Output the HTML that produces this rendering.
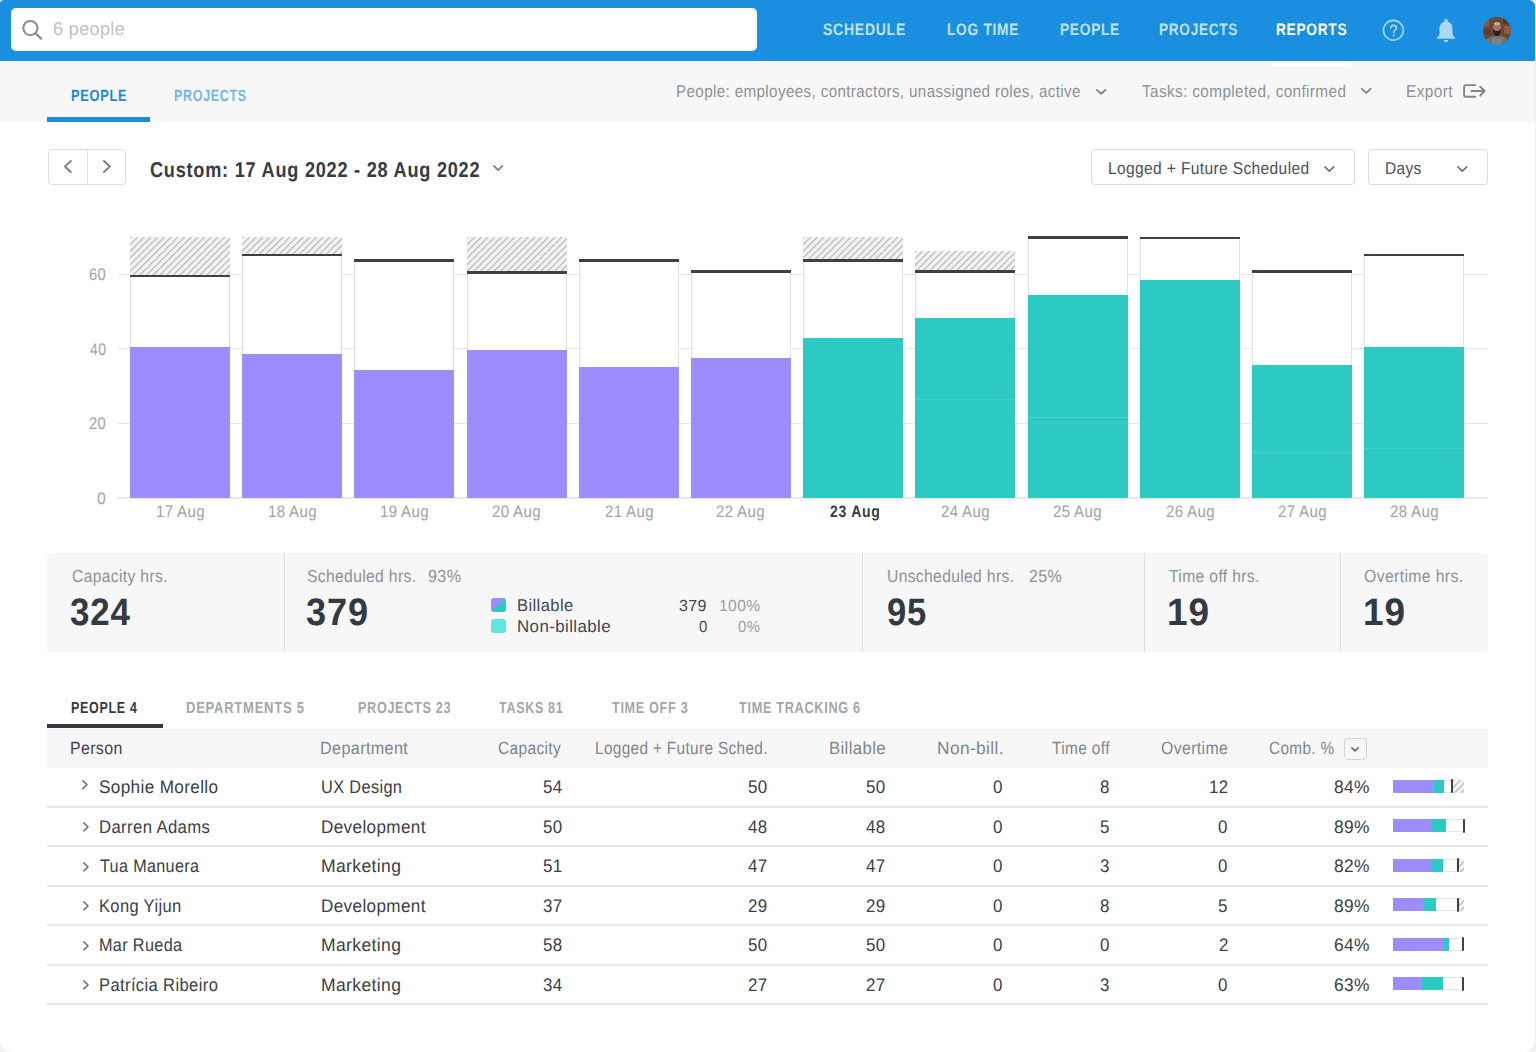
<!DOCTYPE html>
<html><head><meta charset="utf-8"><title>Reports</title>
<style>
html,body{margin:0;padding:0}
body{width:1536px;height:1052px;overflow:hidden;background:#f1f1f1;font-family:"Liberation Sans",sans-serif;position:relative}
#win{position:absolute;left:0;top:0;width:1535px;height:1052px;background:#fff;border-radius:4px 6px 12px 12px;overflow:hidden}
.b{position:absolute;box-sizing:border-box}
.t{position:absolute;white-space:pre;transform-origin:0 0;text-rendering:geometricPrecision}
</style></head><body><div id="win">
<div class="b" style="left:0px;top:0px;width:1535px;height:60.5px;background:#1b8fdf"></div>
<div class="b" style="left:11px;top:8px;width:746px;height:42.5px;background:#fff;border-radius:5px"></div>
<svg class="b" style="left:20px;top:18px" width="26" height="26" viewBox="0 0 26 26"><circle cx="10.4" cy="10.1" r="7.1" fill="none" stroke="#8f8f8f" stroke-width="2.1"/><path d="M15.6 15.3 L21.2 20.6" stroke="#8f8f8f" stroke-width="2.3" stroke-linecap="round"/></svg>
<svg class="b" style="left:1380px;top:17px" width="27" height="27" viewBox="0 0 27 27"><circle cx="13.4" cy="13.3" r="9.9" fill="none" stroke="#a9d9f7" stroke-width="1.6"/><path d="M10.7 11.1 C10.7 9.3 12 8.4 13.5 8.4 C15.1 8.4 16.4 9.5 16.4 11 C16.4 12.8 13.8 13.3 13.8 15.6" fill="none" stroke="#a9d9f7" stroke-width="1.6" stroke-linecap="round"/><circle cx="13.8" cy="18.3" r="1.1" fill="#a9d9f7"/></svg>
<svg class="b" style="left:1434px;top:18px" width="24" height="26" viewBox="0 0 24 26"><circle cx="12" cy="2.9" r="1.8" fill="#a9d9f7"/><path d="M12 3.6 C15.6 3.6 18.5 6.2 18.5 10.2 L18.5 16.4 L21.1 20 C21.4 20.4 21.3 20.8 20.8 20.8 L3.2 20.8 C2.7 20.8 2.6 20.4 2.9 20 L5.5 16.4 L5.5 10.2 C5.5 6.2 8.4 3.6 12 3.6 Z" fill="#a9d9f7"/><path d="M9.6 21.9 L14.4 21.9 C14.2 23.3 13.2 24.1 12 24.1 C10.8 24.1 9.8 23.3 9.6 21.9 Z" fill="#a9d9f7"/></svg>
<svg class="b" style="left:1483px;top:16.5px" width="28" height="28" viewBox="0 0 28 28"><defs><clipPath id="av"><circle cx="14" cy="14" r="13.9"/></clipPath></defs><g clip-path="url(#av)"><rect width="28" height="28" fill="#6e4634"/><rect x="0" y="3" width="6" height="7" fill="#8a5a42"/><rect x="20" y="1" width="8" height="6" fill="#4c3a36"/><rect x="21" y="9" width="7" height="8" fill="#8b5b43"/><rect x="2" y="12" width="6" height="6" fill="#5a3d33"/><path d="M1 28 C2 21.5 6.5 18.8 14 18.8 C21.5 18.8 26 21.5 27 28 Z" fill="#6c7177"/><path d="M9 20 C11 21.5 17 21.5 19 20 L19 28 L9 28 Z" fill="#7d8288"/><ellipse cx="14" cy="10.8" rx="4.1" ry="5.4" fill="#9a7464"/><ellipse cx="14" cy="6.8" rx="3.2" ry="1.8" fill="#c8a696"/><path d="M9.9 11.5 C10.2 16.8 12 19 14 19 C16 19 17.8 16.8 18.1 11.5 C17 13.4 15.6 14 14 14 C12.4 14 11 13.4 9.9 11.5 Z" fill="#2a201c"/></g></svg>
<div class="b" style="left:0px;top:60.5px;width:1535px;height:61.5px;background:#f7f7f7"></div>
<div class="b" style="left:1272px;top:62px;width:79px;height:5px;background:#fff"></div>
<div class="b" style="left:47px;top:117px;width:103px;height:5px;background:#1b8bd8"></div>
<svg class="b" style="left:1095.8px;top:88.6px;overflow:visible" width="10.4" height="5.6"><path d="M0.85 0.85 L5.2 4.75 L9.55 0.85" fill="none" stroke="#7c8187" stroke-width="1.7" stroke-linecap="round" stroke-linejoin="round"/></svg>
<svg class="b" style="left:1361px;top:88.2px;overflow:visible" width="10.4" height="5.8"><path d="M0.85 0.85 L5.2 4.95 L9.55 0.85" fill="none" stroke="#7c8187" stroke-width="1.7" stroke-linecap="round" stroke-linejoin="round"/></svg>
<svg class="b" style="left:1463px;top:83px" width="24" height="16" viewBox="0 0 24 16"><path d="M12.3 2.1 L3.2 2.1 C1.9 2.1 1.1 2.9 1.1 4.2 L1.1 11.7 C1.1 13 1.9 13.8 3.2 13.8 L12.3 13.8" fill="none" stroke="#80868b" stroke-width="1.9" stroke-linecap="round"/><path d="M8.3 8 L21.6 8 M17.2 3.6 L21.6 8 L17.2 12.6" fill="none" stroke="#80868b" stroke-width="1.9" stroke-linecap="round" stroke-linejoin="round"/></svg>
<div class="b" style="left:47.5px;top:148.5px;width:78.5px;height:36.5px;border:1px solid #dedede;border-radius:4px;background:#fff"></div>
<div class="b" style="left:86.5px;top:149px;width:1.5px;height:35.5px;background:#e3e3e3"></div>
<svg class="b" style="left:63.8px;top:160.4px;overflow:visible" width="7.8" height="13"><path d="M6.8 1 L1 6.5 L6.8 12" fill="none" stroke="#7b8187" stroke-width="2" stroke-linecap="round" stroke-linejoin="round"/></svg>
<svg class="b" style="left:102.7px;top:160.4px;overflow:visible" width="7.8" height="13"><path d="M1 1 L6.8 6.5 L1 12" fill="none" stroke="#7b8187" stroke-width="2" stroke-linecap="round" stroke-linejoin="round"/></svg>
<svg class="b" style="left:493.1px;top:165px;overflow:visible" width="10.3" height="6"><path d="M0.9 0.9 L5.15 5.1 L9.4 0.9" fill="none" stroke="#7b8187" stroke-width="1.8" stroke-linecap="round" stroke-linejoin="round"/></svg>
<div class="b" style="left:1090.5px;top:148.5px;width:264.5px;height:36.5px;border:1px solid #dcdcdc;border-radius:4px;background:#fff"></div>
<svg class="b" style="left:1324.2px;top:165.5px;overflow:visible" width="10.6" height="6"><path d="M0.85 0.85 L5.3 5.15 L9.75 0.85" fill="none" stroke="#6e747a" stroke-width="1.7" stroke-linecap="round" stroke-linejoin="round"/></svg>
<div class="b" style="left:1367.7px;top:148.5px;width:120px;height:36.5px;border:1px solid #dcdcdc;border-radius:4px;background:#fff"></div>
<svg class="b" style="left:1457px;top:165.5px;overflow:visible" width="10.6" height="6"><path d="M0.85 0.85 L5.3 5.15 L9.75 0.85" fill="none" stroke="#6e747a" stroke-width="1.7" stroke-linecap="round" stroke-linejoin="round"/></svg>
<div class="b" style="left:118px;top:274px;width:1370px;height:1px;background:#e6e6e6"></div>
<div class="b" style="left:118px;top:348px;width:1370px;height:1px;background:#e6e6e6"></div>
<div class="b" style="left:118px;top:423px;width:1370px;height:1px;background:#e6e6e6"></div>
<div class="b" style="left:118px;top:497px;width:1370px;height:2px;background:#e8e8e8"></div>
<svg width="0" height="0" style="position:absolute"><defs><pattern id="hp" patternUnits="userSpaceOnUse" width="4.74" height="20" patternTransform="rotate(45)"><rect width="4.74" height="20" fill="#f3f3f3"/><rect x="0" width="1.25" height="20" fill="#b8b8b8"/></pattern></defs></svg>
<svg class="b" style="left:130px;top:237px" width="100" height="38.3"><rect width="100%" height="100%" fill="url(#hp)"/></svg>
<div class="b" style="left:130px;top:275.8px;width:100px;height:222.2px;background:#fff;border:1px solid #e3e3e3;border-bottom:none"></div>
<div class="b" style="left:130px;top:347.3px;width:100px;height:150.7px;background:#9b8dfe"></div>
<div class="b" style="left:130px;top:274.8px;width:100px;height:2.6px;background:#3b4149"></div>
<svg class="b" style="left:242.2px;top:237px" width="100" height="17.3"><rect width="100%" height="100%" fill="url(#hp)"/></svg>
<div class="b" style="left:242.2px;top:254.8px;width:100px;height:243.2px;background:#fff;border:1px solid #e3e3e3;border-bottom:none"></div>
<div class="b" style="left:242.2px;top:353.7px;width:100px;height:144.3px;background:#9b8dfe"></div>
<div class="b" style="left:242.2px;top:253.8px;width:100px;height:2.6px;background:#3b4149"></div>
<div class="b" style="left:354.3px;top:260px;width:100px;height:238px;background:#fff;border:1px solid #e3e3e3;border-bottom:none"></div>
<div class="b" style="left:354.3px;top:370.3px;width:100px;height:127.7px;background:#9b8dfe"></div>
<div class="b" style="left:354.3px;top:259px;width:100px;height:2.6px;background:#3b4149"></div>
<svg class="b" style="left:466.5px;top:237px" width="100" height="34.6"><rect width="100%" height="100%" fill="url(#hp)"/></svg>
<div class="b" style="left:466.5px;top:272.1px;width:100px;height:225.9px;background:#fff;border:1px solid #e3e3e3;border-bottom:none"></div>
<div class="b" style="left:466.5px;top:350.3px;width:100px;height:147.7px;background:#9b8dfe"></div>
<div class="b" style="left:466.5px;top:271.1px;width:100px;height:2.6px;background:#3b4149"></div>
<div class="b" style="left:579px;top:260px;width:100px;height:238px;background:#fff;border:1px solid #e3e3e3;border-bottom:none"></div>
<div class="b" style="left:579px;top:366.9px;width:100px;height:131.1px;background:#9b8dfe"></div>
<div class="b" style="left:579px;top:259px;width:100px;height:2.6px;background:#3b4149"></div>
<div class="b" style="left:690.8px;top:271.2px;width:100px;height:226.8px;background:#fff;border:1px solid #e3e3e3;border-bottom:none"></div>
<div class="b" style="left:690.8px;top:358.4px;width:100px;height:139.6px;background:#9b8dfe"></div>
<div class="b" style="left:690.8px;top:270.2px;width:100px;height:2.6px;background:#3b4149"></div>
<svg class="b" style="left:803px;top:237px" width="100" height="22.5"><rect width="100%" height="100%" fill="url(#hp)"/></svg>
<div class="b" style="left:803px;top:260px;width:100px;height:238px;background:#fff;border:1px solid #e3e3e3;border-bottom:none"></div>
<div class="b" style="left:803px;top:337.5px;width:100px;height:160.5px;background:#2ccac3"></div>
<div class="b" style="left:803px;top:259px;width:100px;height:2.6px;background:#3b4149"></div>
<svg class="b" style="left:915.2px;top:251.1px" width="100" height="19.7"><rect width="100%" height="100%" fill="url(#hp)"/></svg>
<div class="b" style="left:915.2px;top:271.3px;width:100px;height:226.7px;background:#fff;border:1px solid #e3e3e3;border-bottom:none"></div>
<div class="b" style="left:915.2px;top:317.5px;width:100px;height:180.5px;background:#2ccac3"></div>
<div class="b" style="left:915.2px;top:398.9px;width:100px;height:1px;background:rgba(255,255,255,0.12)"></div>
<div class="b" style="left:915.2px;top:270.3px;width:100px;height:2.6px;background:#3b4149"></div>
<div class="b" style="left:1027.8px;top:237.3px;width:100px;height:260.7px;background:#fff;border:1px solid #e3e3e3;border-bottom:none"></div>
<div class="b" style="left:1027.8px;top:295.4px;width:100px;height:202.6px;background:#2ccac3"></div>
<div class="b" style="left:1027.8px;top:416.9px;width:100px;height:1px;background:rgba(255,255,255,0.12)"></div>
<div class="b" style="left:1027.8px;top:236.3px;width:100px;height:2.6px;background:#3b4149"></div>
<div class="b" style="left:1140px;top:237.6px;width:100px;height:260.4px;background:#fff;border:1px solid #e3e3e3;border-bottom:none"></div>
<div class="b" style="left:1140px;top:280.1px;width:100px;height:217.9px;background:#2ccac3"></div>
<div class="b" style="left:1140px;top:236.6px;width:100px;height:2.6px;background:#3b4149"></div>
<div class="b" style="left:1252px;top:271.3px;width:100px;height:226.7px;background:#fff;border:1px solid #e3e3e3;border-bottom:none"></div>
<div class="b" style="left:1252px;top:364.7px;width:100px;height:133.3px;background:#2ccac3"></div>
<div class="b" style="left:1252px;top:451.5px;width:100px;height:1px;background:rgba(255,255,255,0.12)"></div>
<div class="b" style="left:1252px;top:270.3px;width:100px;height:2.6px;background:#3b4149"></div>
<div class="b" style="left:1364.2px;top:254.8px;width:100px;height:243.2px;background:#fff;border:1px solid #e3e3e3;border-bottom:none"></div>
<div class="b" style="left:1364.2px;top:347.1px;width:100px;height:150.9px;background:#2ccac3"></div>
<div class="b" style="left:1364.2px;top:447.5px;width:100px;height:1px;background:rgba(255,255,255,0.12)"></div>
<div class="b" style="left:1364.2px;top:253.8px;width:100px;height:2.6px;background:#3b4149"></div>
<div class="b" style="left:46.5px;top:553px;width:1441.5px;height:98.5px;background:#f7f7f7;border-radius:4px"></div>
<div class="b" style="left:284px;top:553px;width:1px;height:98.5px;background:#dfdfdf"></div>
<div class="b" style="left:862px;top:553px;width:1px;height:98.5px;background:#dfdfdf"></div>
<div class="b" style="left:1144px;top:553px;width:1px;height:98.5px;background:#dfdfdf"></div>
<div class="b" style="left:1340px;top:553px;width:1px;height:98.5px;background:#dfdfdf"></div>
<div class="b" style="left:491px;top:597.8px;width:14.5px;height:14px;border-radius:3px;background:linear-gradient(135deg,#9b8dfe 0%,#9b8dfe 45%,#2ccac3 55%,#2ccac3 100%)"></div>
<div class="b" style="left:491px;top:619.2px;width:14.5px;height:13.6px;border-radius:3px;background:#5ee6df"></div>
<div class="b" style="left:46.7px;top:723.8px;width:115.9px;height:4.4px;background:#343a42"></div>
<div class="b" style="left:46.7px;top:728.5px;width:1441.3px;height:39.3px;background:#f7f7f7"></div>
<div class="b" style="left:1343.5px;top:738.2px;width:23px;height:22.2px;border:1px solid #d3d3d3;border-radius:4px;background:#f7f7f7"></div>
<svg class="b" style="left:1350.8px;top:747.4px;overflow:visible" width="8" height="4.6"><path d="M0.75 0.75 L4 3.85 L7.25 0.75" fill="none" stroke="#5f656b" stroke-width="1.5" stroke-linecap="round" stroke-linejoin="round"/></svg>
<div class="b" style="left:46.7px;top:806px;width:1441.3px;height:2px;background:#e7e7e7"></div>
<svg class="b" style="left:82.3px;top:779.6px;overflow:visible" width="5.8" height="9.4"><path d="M0.8 0.8 L5 4.7 L0.8 8.6" fill="none" stroke="#737980" stroke-width="1.6" stroke-linecap="round" stroke-linejoin="round"/></svg>
<div class="b" style="left:1393.3px;top:779.8px;width:70.9px;height:13.2px;background:#fff;border:1px solid #e4e4e4"></div>
<svg class="b" style="left:1453px;top:779.8px" width="11.2" height="13.2"><rect width="100%" height="100%" fill="url(#hp)"/></svg>
<div class="b" style="left:1393.3px;top:779.8px;width:50.5px;height:13.2px;background:#9b8dfe"></div>
<div class="b" style="left:1434.2px;top:779.8px;width:9.6px;height:13.2px;background:#2ccac3"></div>
<div class="b" style="left:1451px;top:779.3px;width:2px;height:14.2px;background:#3b4149;border-radius:1px"></div>
<div class="b" style="left:46.7px;top:845px;width:1441.3px;height:2px;background:#e7e7e7"></div>
<svg class="b" style="left:83.3px;top:822.2px;overflow:visible" width="5.8" height="9.6"><path d="M0.8 0.8 L5 4.8 L0.8 8.8" fill="none" stroke="#737980" stroke-width="1.6" stroke-linecap="round" stroke-linejoin="round"/></svg>
<div class="b" style="left:1393.3px;top:819.3px;width:70.9px;height:13.2px;background:#fff;border:1px solid #e4e4e4"></div>
<div class="b" style="left:1393.3px;top:819.3px;width:52.9px;height:13.2px;background:#9b8dfe"></div>
<div class="b" style="left:1431px;top:819.3px;width:15.2px;height:13.2px;background:#2ccac3"></div>
<div class="b" style="left:1463px;top:818.8px;width:2px;height:14.2px;background:#3b4149;border-radius:1px"></div>
<div class="b" style="left:46.7px;top:885px;width:1441.3px;height:2px;background:#e7e7e7"></div>
<svg class="b" style="left:83.3px;top:861.7px;overflow:visible" width="5.8" height="9.6"><path d="M0.8 0.8 L5 4.8 L0.8 8.8" fill="none" stroke="#737980" stroke-width="1.6" stroke-linecap="round" stroke-linejoin="round"/></svg>
<div class="b" style="left:1393.3px;top:858.8px;width:70.9px;height:13.2px;background:#fff;border:1px solid #e4e4e4"></div>
<svg class="b" style="left:1459.2px;top:858.8px" width="5" height="13.2"><rect width="100%" height="100%" fill="url(#hp)"/></svg>
<div class="b" style="left:1393.3px;top:858.8px;width:49.7px;height:13.2px;background:#9b8dfe"></div>
<div class="b" style="left:1431px;top:858.8px;width:12px;height:13.2px;background:#2ccac3"></div>
<div class="b" style="left:1457px;top:858.3px;width:2px;height:14.2px;background:#3b4149;border-radius:1px"></div>
<div class="b" style="left:46.7px;top:924px;width:1441.3px;height:2px;background:#e7e7e7"></div>
<svg class="b" style="left:83.3px;top:901.2px;overflow:visible" width="5.8" height="9.6"><path d="M0.8 0.8 L5 4.8 L0.8 8.8" fill="none" stroke="#737980" stroke-width="1.6" stroke-linecap="round" stroke-linejoin="round"/></svg>
<div class="b" style="left:1393.3px;top:898.3px;width:70.9px;height:13.2px;background:#fff;border:1px solid #e4e4e4"></div>
<svg class="b" style="left:1459.2px;top:898.3px" width="5" height="13.2"><rect width="100%" height="100%" fill="url(#hp)"/></svg>
<div class="b" style="left:1393.3px;top:898.3px;width:42.4px;height:13.2px;background:#9b8dfe"></div>
<div class="b" style="left:1423.7px;top:898.3px;width:12px;height:13.2px;background:#2ccac3"></div>
<div class="b" style="left:1457px;top:897.8px;width:2px;height:14.2px;background:#3b4149;border-radius:1px"></div>
<div class="b" style="left:46.7px;top:964px;width:1441.3px;height:2px;background:#e7e7e7"></div>
<svg class="b" style="left:83.3px;top:940.7px;overflow:visible" width="5.8" height="9.6"><path d="M0.8 0.8 L5 4.8 L0.8 8.8" fill="none" stroke="#737980" stroke-width="1.6" stroke-linecap="round" stroke-linejoin="round"/></svg>
<div class="b" style="left:1393.3px;top:937.8px;width:70.9px;height:13.2px;background:#fff;border:1px solid #e4e4e4"></div>
<div class="b" style="left:1393.3px;top:937.8px;width:55.6px;height:13.2px;background:#9b8dfe"></div>
<div class="b" style="left:1443.8px;top:937.8px;width:5.1px;height:13.2px;background:#2ccac3"></div>
<div class="b" style="left:1462px;top:937.3px;width:2px;height:14.2px;background:#3b4149;border-radius:1px"></div>
<div class="b" style="left:46.7px;top:1003px;width:1441.3px;height:2px;background:#e7e7e7"></div>
<svg class="b" style="left:83.3px;top:980.2px;overflow:visible" width="5.8" height="9.6"><path d="M0.8 0.8 L5 4.8 L0.8 8.8" fill="none" stroke="#737980" stroke-width="1.6" stroke-linecap="round" stroke-linejoin="round"/></svg>
<div class="b" style="left:1393.3px;top:977.3px;width:70.9px;height:13.2px;background:#fff;border:1px solid #e4e4e4"></div>
<div class="b" style="left:1393.3px;top:977.3px;width:49.7px;height:13.2px;background:#9b8dfe"></div>
<div class="b" style="left:1421.5px;top:977.3px;width:21.5px;height:13.2px;background:#2ccac3"></div>
<div class="b" style="left:1462px;top:976.8px;width:2px;height:14.2px;background:#3b4149;border-radius:1px"></div>
<div class="t" style="left:822.66px;top:22px;font-size:16.6px;line-height:16.6px;color:#bfe2fa;font-weight:700;letter-spacing:0.9px;transform:scaleX(0.843)">SCHEDULE</div>
<div class="t" style="left:947.08px;top:22px;font-size:16.6px;line-height:16.6px;color:#bfe2fa;font-weight:700;letter-spacing:0.9px;transform:scaleX(0.824)">LOG TIME</div>
<div class="t" style="left:1060.17px;top:22px;font-size:16.6px;line-height:16.6px;color:#bfe2fa;font-weight:700;letter-spacing:0.9px;transform:scaleX(0.825)">PEOPLE</div>
<div class="t" style="left:1158.88px;top:22px;font-size:16.6px;line-height:16.6px;color:#bfe2fa;font-weight:700;letter-spacing:0.9px;transform:scaleX(0.819)">PROJECTS</div>
<div class="t" style="left:1276.08px;top:22px;font-size:16.6px;line-height:16.6px;color:#ffffff;font-weight:700;letter-spacing:0.9px;transform:scaleX(0.824)">REPORTS</div>
<div class="t" style="left:53.33px;top:20px;font-size:18.6px;line-height:18.6px;color:#c0c2c4;letter-spacing:0.4px;transform:scaleX(0.968)">6 people</div>
<div class="t" style="left:70.71px;top:88px;font-size:16.3px;line-height:16.3px;color:#1b8ad6;font-weight:700;letter-spacing:0.9px;transform:scaleX(0.786)">PEOPLE</div>
<div class="t" style="left:173.93px;top:88px;font-size:16.3px;line-height:16.3px;color:#6fb7eb;font-weight:700;letter-spacing:0.9px;transform:scaleX(0.767)">PROJECTS</div>
<div class="t" style="left:675.6px;top:83px;font-size:17px;line-height:17px;color:#8d9297;letter-spacing:0.4px;transform:scaleX(0.895)">People: employees, contractors, unassigned roles, active</div>
<div class="t" style="left:1142.2px;top:83px;font-size:17px;line-height:17px;color:#8d9297;letter-spacing:0.4px;transform:scaleX(0.903)">Tasks: completed, confirmed</div>
<div class="t" style="left:1405.69px;top:83px;font-size:17px;line-height:17px;color:#8d9297;letter-spacing:0.4px;transform:scaleX(0.908)">Export</div>
<div class="t" style="left:149.86px;top:160px;font-size:21.5px;line-height:21.5px;color:#363c44;font-weight:700;letter-spacing:0.9px;transform:scaleX(0.844)">Custom: 17 Aug 2022 - 28 Aug 2022</div>
<div class="t" style="left:1108.1px;top:160px;font-size:17.2px;line-height:17.2px;color:#4a5058;letter-spacing:0.4px;transform:scaleX(0.905)">Logged + Future Scheduled</div>
<div class="t" style="left:1385.1px;top:160px;font-size:17.2px;line-height:17.2px;color:#4a5058;letter-spacing:0.4px;transform:scaleX(0.897)">Days</div>
<div class="t" style="left:88.62px;top:267px;font-size:16.8px;line-height:16.8px;color:#9ea3a8;letter-spacing:0.4px;transform:scaleX(0.883)">60</div>
<div class="t" style="left:89.5px;top:342px;font-size:16.8px;line-height:16.8px;color:#9ea3a8;letter-spacing:0.4px;transform:scaleX(0.837)">40</div>
<div class="t" style="left:88.62px;top:416px;font-size:16.8px;line-height:16.8px;color:#9ea3a8;letter-spacing:0.4px;transform:scaleX(0.883)">20</div>
<div class="t" style="left:97.03px;top:491px;font-size:16.8px;line-height:16.8px;color:#9ea3a8;letter-spacing:0.4px;transform:scaleX(0.930)">0</div>
<div class="t" style="left:155.6px;top:504px;font-size:16.6px;line-height:16.6px;color:#9ea3a8;letter-spacing:0.4px;transform:scaleX(0.904)">17 Aug</div>
<div class="t" style="left:267.8px;top:504px;font-size:16.6px;line-height:16.6px;color:#9ea3a8;letter-spacing:0.4px;transform:scaleX(0.904)">18 Aug</div>
<div class="t" style="left:380.1px;top:504px;font-size:16.6px;line-height:16.6px;color:#9ea3a8;letter-spacing:0.4px;transform:scaleX(0.904)">19 Aug</div>
<div class="t" style="left:492.1px;top:504px;font-size:16.6px;line-height:16.6px;color:#9ea3a8;letter-spacing:0.4px;transform:scaleX(0.904)">20 Aug</div>
<div class="t" style="left:604.6px;top:504px;font-size:16.6px;line-height:16.6px;color:#9ea3a8;letter-spacing:0.4px;transform:scaleX(0.904)">21 Aug</div>
<div class="t" style="left:716.4px;top:504px;font-size:16.6px;line-height:16.6px;color:#9ea3a8;letter-spacing:0.4px;transform:scaleX(0.904)">22 Aug</div>
<div class="t" style="left:829.75px;top:504px;font-size:16.6px;line-height:16.6px;color:#353b43;font-weight:700;letter-spacing:0.9px;transform:scaleX(0.843)">23 Aug</div>
<div class="t" style="left:940.8px;top:504px;font-size:16.6px;line-height:16.6px;color:#9ea3a8;letter-spacing:0.4px;transform:scaleX(0.904)">24 Aug</div>
<div class="t" style="left:1053.4px;top:504px;font-size:16.6px;line-height:16.6px;color:#9ea3a8;letter-spacing:0.4px;transform:scaleX(0.904)">25 Aug</div>
<div class="t" style="left:1165.6px;top:504px;font-size:16.6px;line-height:16.6px;color:#9ea3a8;letter-spacing:0.4px;transform:scaleX(0.904)">26 Aug</div>
<div class="t" style="left:1277.6px;top:504px;font-size:16.6px;line-height:16.6px;color:#9ea3a8;letter-spacing:0.4px;transform:scaleX(0.904)">27 Aug</div>
<div class="t" style="left:1389.8px;top:504px;font-size:16.6px;line-height:16.6px;color:#9ea3a8;letter-spacing:0.4px;transform:scaleX(0.904)">28 Aug</div>
<div class="t" style="left:71.51px;top:568px;font-size:17.5px;line-height:17.5px;color:#8c9197;letter-spacing:0.4px;transform:scaleX(0.893)">Capacity hrs.</div>
<div class="t" style="left:69.89px;top:594px;font-size:38.2px;line-height:38.2px;color:#343a42;font-weight:700;letter-spacing:0.9px;transform:scaleX(0.914)">324</div>
<div class="t" style="left:306.51px;top:568px;font-size:17.5px;line-height:17.5px;color:#8c9197;letter-spacing:0.4px;transform:scaleX(0.894)">Scheduled hrs.</div>
<div class="t" style="left:428.08px;top:568px;font-size:17.5px;line-height:17.5px;color:#8c9197;letter-spacing:0.4px;transform:scaleX(0.921)">93%</div>
<div class="t" style="left:306.25px;top:594px;font-size:38.2px;line-height:38.2px;color:#343a42;font-weight:700;letter-spacing:0.9px;transform:scaleX(0.946)">379</div>
<div class="t" style="left:516.62px;top:597px;font-size:17px;line-height:17px;color:#41474f;letter-spacing:0.4px;transform:scaleX(0.975)">Billable</div>
<div class="t" style="left:516.61px;top:618px;font-size:17px;line-height:17px;color:#41474f;letter-spacing:0.4px;transform:scaleX(0.994)">Non-billable</div>
<div class="t" style="left:679px;top:599px;font-size:16px;line-height:16px;color:#41474f;letter-spacing:0.4px">379</div>
<div class="t" style="left:718.62px;top:599px;font-size:16px;line-height:16px;color:#9a9fa4;letter-spacing:0.4px;transform:scaleX(0.976)">100%</div>
<div class="t" style="left:698.56px;top:620px;font-size:16px;line-height:16px;color:#41474f;letter-spacing:0.4px;transform:scaleX(0.930)">0</div>
<div class="t" style="left:738.21px;top:620px;font-size:16px;line-height:16px;color:#9a9fa4;letter-spacing:0.4px;transform:scaleX(0.930)">0%</div>
<div class="t" style="left:887.11px;top:568px;font-size:17.5px;line-height:17.5px;color:#8c9197;letter-spacing:0.4px;transform:scaleX(0.893)">Unscheduled hrs.</div>
<div class="t" style="left:1029.09px;top:568px;font-size:17.5px;line-height:17.5px;color:#8c9197;letter-spacing:0.4px;transform:scaleX(0.912)">25%</div>
<div class="t" style="left:887.1px;top:594px;font-size:38.2px;line-height:38.2px;color:#343a42;font-weight:700;letter-spacing:0.9px;transform:scaleX(0.905)">95</div>
<div class="t" style="left:1169.3px;top:568px;font-size:17.5px;line-height:17.5px;color:#8c9197;letter-spacing:0.4px;transform:scaleX(0.894)">Time off hrs.</div>
<div class="t" style="left:1167.37px;top:594px;font-size:38.2px;line-height:38.2px;color:#343a42;font-weight:700;letter-spacing:0.9px;transform:scaleX(0.968)">19</div>
<div class="t" style="left:1363.6px;top:568px;font-size:17.5px;line-height:17.5px;color:#8c9197;letter-spacing:0.4px;transform:scaleX(0.902)">Overtime hrs.</div>
<div class="t" style="left:1362.57px;top:594px;font-size:38.2px;line-height:38.2px;color:#343a42;font-weight:700;letter-spacing:0.9px;transform:scaleX(0.968)">19</div>
<div class="t" style="left:70.52px;top:701px;font-size:16px;line-height:16px;color:#343a42;font-weight:700;letter-spacing:0.9px;transform:scaleX(0.780)">PEOPLE 4</div>
<div class="t" style="left:185.89px;top:701px;font-size:16px;line-height:16px;color:#a2a7ac;font-weight:700;letter-spacing:0.9px;transform:scaleX(0.815)">DEPARTMENTS 5</div>
<div class="t" style="left:358.31px;top:701px;font-size:16px;line-height:16px;color:#a2a7ac;font-weight:700;letter-spacing:0.9px;transform:scaleX(0.787)">PROJECTS 23</div>
<div class="t" style="left:499.1px;top:701px;font-size:16px;line-height:16px;color:#a2a7ac;font-weight:700;letter-spacing:0.9px;transform:scaleX(0.781)">TASKS 81</div>
<div class="t" style="left:611.7px;top:701px;font-size:16px;line-height:16px;color:#a2a7ac;font-weight:700;letter-spacing:0.9px;transform:scaleX(0.787)">TIME OFF 3</div>
<div class="t" style="left:739.3px;top:701px;font-size:16px;line-height:16px;color:#a2a7ac;font-weight:700;letter-spacing:0.9px;transform:scaleX(0.791)">TIME TRACKING 6</div>
<div class="t" style="left:69.9px;top:740px;font-size:17.7px;line-height:17.7px;color:#3d434b;letter-spacing:0.4px;transform:scaleX(0.900)">Person</div>
<div class="t" style="left:320.09px;top:740px;font-size:17.7px;line-height:17.7px;color:#7f858b;letter-spacing:0.4px;transform:scaleX(0.915)">Department</div>
<div class="t" style="left:498.22px;top:740px;font-size:17.7px;line-height:17.7px;color:#7f858b;letter-spacing:0.4px;transform:scaleX(0.876)">Capacity</div>
<div class="t" style="left:595.13px;top:740px;font-size:17.7px;line-height:17.7px;color:#7f858b;letter-spacing:0.4px;transform:scaleX(0.868)">Logged + Future Sched.</div>
<div class="t" style="left:828.56px;top:740px;font-size:17.7px;line-height:17.7px;color:#7f858b;letter-spacing:0.4px;transform:scaleX(0.945)">Billable</div>
<div class="t" style="left:936.72px;top:740px;font-size:17.7px;line-height:17.7px;color:#7f858b;letter-spacing:0.4px;transform:scaleX(0.979)">Non-bill.</div>
<div class="t" style="left:1051.6px;top:740px;font-size:17.7px;line-height:17.7px;color:#7f858b;letter-spacing:0.4px;transform:scaleX(0.874)">Time off</div>
<div class="t" style="left:1160.9px;top:740px;font-size:17.7px;line-height:17.7px;color:#7f858b;letter-spacing:0.4px;transform:scaleX(0.896)">Overtime</div>
<div class="t" style="left:1269.13px;top:740px;font-size:17.7px;line-height:17.7px;color:#7f858b;letter-spacing:0.4px;transform:scaleX(0.868)">Comb. %</div>
<div class="t" style="left:98.96px;top:778px;font-size:18.2px;line-height:18.2px;color:#3a4047;letter-spacing:0.4px;transform:scaleX(0.941)">Sophie Morello</div>
<div class="t" style="left:321.1px;top:778px;font-size:18.2px;line-height:18.2px;color:#3a4047;letter-spacing:0.4px;transform:scaleX(0.898)">UX Design</div>
<div class="t" style="left:542.7px;top:778px;font-size:18.2px;line-height:18.2px;color:#3a4047;letter-spacing:0.4px;transform:scaleX(0.930)">54</div>
<div class="t" style="left:747.6px;top:778px;font-size:18.2px;line-height:18.2px;color:#3a4047;letter-spacing:0.4px;transform:scaleX(0.930)">50</div>
<div class="t" style="left:865.7px;top:778px;font-size:18.2px;line-height:18.2px;color:#3a4047;letter-spacing:0.4px;transform:scaleX(0.930)">50</div>
<div class="t" style="left:993px;top:778px;font-size:18.2px;line-height:18.2px;color:#3a4047;letter-spacing:0.4px;transform:scaleX(0.930)">0</div>
<div class="t" style="left:1100px;top:778px;font-size:18.2px;line-height:18.2px;color:#3a4047;letter-spacing:0.4px;transform:scaleX(0.930)">8</div>
<div class="t" style="left:1208.6px;top:778px;font-size:18.2px;line-height:18.2px;color:#3a4047;letter-spacing:0.4px;transform:scaleX(0.930)">12</div>
<div class="t" style="left:1334.05px;top:778px;font-size:18.2px;line-height:18.2px;color:#3a4047;letter-spacing:0.4px;transform:scaleX(0.953)">84%</div>
<div class="t" style="left:98.98px;top:818px;font-size:18.2px;line-height:18.2px;color:#3a4047;letter-spacing:0.4px;transform:scaleX(0.919)">Darren Adams</div>
<div class="t" style="left:321.06px;top:818px;font-size:18.2px;line-height:18.2px;color:#3a4047;letter-spacing:0.4px;transform:scaleX(0.940)">Development</div>
<div class="t" style="left:542.7px;top:818px;font-size:18.2px;line-height:18.2px;color:#3a4047;letter-spacing:0.4px;transform:scaleX(0.930)">50</div>
<div class="t" style="left:747.6px;top:818px;font-size:18.2px;line-height:18.2px;color:#3a4047;letter-spacing:0.4px;transform:scaleX(0.930)">48</div>
<div class="t" style="left:865.7px;top:818px;font-size:18.2px;line-height:18.2px;color:#3a4047;letter-spacing:0.4px;transform:scaleX(0.930)">48</div>
<div class="t" style="left:993px;top:818px;font-size:18.2px;line-height:18.2px;color:#3a4047;letter-spacing:0.4px;transform:scaleX(0.930)">0</div>
<div class="t" style="left:1100px;top:818px;font-size:18.2px;line-height:18.2px;color:#3a4047;letter-spacing:0.4px;transform:scaleX(0.930)">5</div>
<div class="t" style="left:1217.9px;top:818px;font-size:18.2px;line-height:18.2px;color:#3a4047;letter-spacing:0.4px;transform:scaleX(0.930)">0</div>
<div class="t" style="left:1334.05px;top:818px;font-size:18.2px;line-height:18.2px;color:#3a4047;letter-spacing:0.4px;transform:scaleX(0.953)">89%</div>
<div class="t" style="left:99.9px;top:857px;font-size:18.2px;line-height:18.2px;color:#3a4047;letter-spacing:0.4px;transform:scaleX(0.888)">Tua Manuera</div>
<div class="t" style="left:321.04px;top:857px;font-size:18.2px;line-height:18.2px;color:#3a4047;letter-spacing:0.4px;transform:scaleX(0.962)">Marketing</div>
<div class="t" style="left:542.7px;top:857px;font-size:18.2px;line-height:18.2px;color:#3a4047;letter-spacing:0.4px;transform:scaleX(0.930)">51</div>
<div class="t" style="left:747.6px;top:857px;font-size:18.2px;line-height:18.2px;color:#3a4047;letter-spacing:0.4px;transform:scaleX(0.930)">47</div>
<div class="t" style="left:865.7px;top:857px;font-size:18.2px;line-height:18.2px;color:#3a4047;letter-spacing:0.4px;transform:scaleX(0.930)">47</div>
<div class="t" style="left:993px;top:857px;font-size:18.2px;line-height:18.2px;color:#3a4047;letter-spacing:0.4px;transform:scaleX(0.930)">0</div>
<div class="t" style="left:1100px;top:857px;font-size:18.2px;line-height:18.2px;color:#3a4047;letter-spacing:0.4px;transform:scaleX(0.930)">3</div>
<div class="t" style="left:1217.9px;top:857px;font-size:18.2px;line-height:18.2px;color:#3a4047;letter-spacing:0.4px;transform:scaleX(0.930)">0</div>
<div class="t" style="left:1334.05px;top:857px;font-size:18.2px;line-height:18.2px;color:#3a4047;letter-spacing:0.4px;transform:scaleX(0.953)">82%</div>
<div class="t" style="left:98.99px;top:897px;font-size:18.2px;line-height:18.2px;color:#3a4047;letter-spacing:0.4px;transform:scaleX(0.907)">Kong Yijun</div>
<div class="t" style="left:321.06px;top:897px;font-size:18.2px;line-height:18.2px;color:#3a4047;letter-spacing:0.4px;transform:scaleX(0.940)">Development</div>
<div class="t" style="left:542.7px;top:897px;font-size:18.2px;line-height:18.2px;color:#3a4047;letter-spacing:0.4px;transform:scaleX(0.930)">37</div>
<div class="t" style="left:747.6px;top:897px;font-size:18.2px;line-height:18.2px;color:#3a4047;letter-spacing:0.4px;transform:scaleX(0.930)">29</div>
<div class="t" style="left:865.7px;top:897px;font-size:18.2px;line-height:18.2px;color:#3a4047;letter-spacing:0.4px;transform:scaleX(0.930)">29</div>
<div class="t" style="left:993px;top:897px;font-size:18.2px;line-height:18.2px;color:#3a4047;letter-spacing:0.4px;transform:scaleX(0.930)">0</div>
<div class="t" style="left:1100px;top:897px;font-size:18.2px;line-height:18.2px;color:#3a4047;letter-spacing:0.4px;transform:scaleX(0.930)">8</div>
<div class="t" style="left:1217.9px;top:897px;font-size:18.2px;line-height:18.2px;color:#3a4047;letter-spacing:0.4px;transform:scaleX(0.930)">5</div>
<div class="t" style="left:1334.05px;top:897px;font-size:18.2px;line-height:18.2px;color:#3a4047;letter-spacing:0.4px;transform:scaleX(0.953)">89%</div>
<div class="t" style="left:99.01px;top:936px;font-size:18.2px;line-height:18.2px;color:#3a4047;letter-spacing:0.4px;transform:scaleX(0.892)">Mar Rueda</div>
<div class="t" style="left:321.04px;top:936px;font-size:18.2px;line-height:18.2px;color:#3a4047;letter-spacing:0.4px;transform:scaleX(0.962)">Marketing</div>
<div class="t" style="left:542.7px;top:936px;font-size:18.2px;line-height:18.2px;color:#3a4047;letter-spacing:0.4px;transform:scaleX(0.930)">58</div>
<div class="t" style="left:747.6px;top:936px;font-size:18.2px;line-height:18.2px;color:#3a4047;letter-spacing:0.4px;transform:scaleX(0.930)">50</div>
<div class="t" style="left:865.7px;top:936px;font-size:18.2px;line-height:18.2px;color:#3a4047;letter-spacing:0.4px;transform:scaleX(0.930)">50</div>
<div class="t" style="left:993px;top:936px;font-size:18.2px;line-height:18.2px;color:#3a4047;letter-spacing:0.4px;transform:scaleX(0.930)">0</div>
<div class="t" style="left:1100px;top:936px;font-size:18.2px;line-height:18.2px;color:#3a4047;letter-spacing:0.4px;transform:scaleX(0.930)">0</div>
<div class="t" style="left:1218.83px;top:936px;font-size:18.2px;line-height:18.2px;color:#3a4047;letter-spacing:0.4px;transform:scaleX(0.930)">2</div>
<div class="t" style="left:1334.05px;top:936px;font-size:18.2px;line-height:18.2px;color:#3a4047;letter-spacing:0.4px;transform:scaleX(0.953)">64%</div>
<div class="t" style="left:98.99px;top:976px;font-size:18.2px;line-height:18.2px;color:#3a4047;letter-spacing:0.4px;transform:scaleX(0.912)">Patrícia Ribeiro</div>
<div class="t" style="left:321.04px;top:976px;font-size:18.2px;line-height:18.2px;color:#3a4047;letter-spacing:0.4px;transform:scaleX(0.962)">Marketing</div>
<div class="t" style="left:542.7px;top:976px;font-size:18.2px;line-height:18.2px;color:#3a4047;letter-spacing:0.4px;transform:scaleX(0.930)">34</div>
<div class="t" style="left:747.6px;top:976px;font-size:18.2px;line-height:18.2px;color:#3a4047;letter-spacing:0.4px;transform:scaleX(0.930)">27</div>
<div class="t" style="left:865.7px;top:976px;font-size:18.2px;line-height:18.2px;color:#3a4047;letter-spacing:0.4px;transform:scaleX(0.930)">27</div>
<div class="t" style="left:993px;top:976px;font-size:18.2px;line-height:18.2px;color:#3a4047;letter-spacing:0.4px;transform:scaleX(0.930)">0</div>
<div class="t" style="left:1100px;top:976px;font-size:18.2px;line-height:18.2px;color:#3a4047;letter-spacing:0.4px;transform:scaleX(0.930)">3</div>
<div class="t" style="left:1217.9px;top:976px;font-size:18.2px;line-height:18.2px;color:#3a4047;letter-spacing:0.4px;transform:scaleX(0.930)">0</div>
<div class="t" style="left:1334.05px;top:976px;font-size:18.2px;line-height:18.2px;color:#3a4047;letter-spacing:0.4px;transform:scaleX(0.953)">63%</div>
</div></body></html>
